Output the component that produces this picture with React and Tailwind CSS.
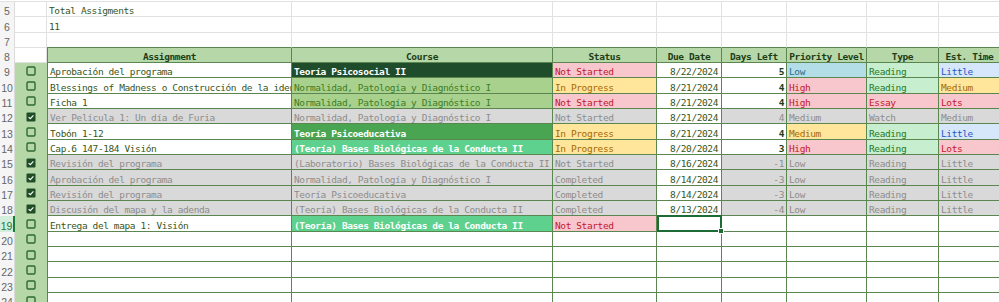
import React from 'react';

const rows = [
  { n: 9, done: false, a: 'Aprobación del programa', c: 'Teoría Psicosocial II', ck: 'dark', s: 'ns', d: '8/22/2024', left: '5', p: 'low', t: 'reading', e: 'little' },
  { n: 10, done: false, a: 'Blessings of Madness o Construcción de la identidad', c: 'Normalidad, Patología y Diagnóstico I', ck: 'olive', s: 'ip', d: '8/21/2024', left: '4', p: 'high', t: 'reading', e: 'medium' },
  { n: 11, done: false, a: 'Ficha 1', c: 'Normalidad, Patología y Diagnóstico I', ck: 'olive', s: 'ns', d: '8/21/2024', left: '4', p: 'high', t: 'essay', e: 'lots' },
  { n: 12, done: true, a: 'Ver Película 1: Un día de Furia', c: 'Normalidad, Patología y Diagnóstico I', s: 'ns', d: '8/21/2024', left: '4', p: 'medium', t: 'watch', e: 'medium' },
  { n: 13, done: false, a: 'Tobón 1-12', c: 'Teoría Psicoeducativa', ck: 'mid', s: 'ip', d: '8/21/2024', left: '4', p: 'medium', t: 'reading', e: 'little' },
  { n: 14, done: false, a: 'Cap.6 147-184 Visión', c: '(Teoría) Bases Biológicas de la Conducta II', ck: 'mint', s: 'ip', d: '8/20/2024', left: '3', p: 'high', t: 'reading', e: 'lots' },
  { n: 15, done: true, a: 'Revisión del programa', c: '(Laboratorio) Bases Biológicas de la Conducta II', s: 'ns', d: '8/16/2024', left: '-1', p: 'low', t: 'reading', e: 'little' },
  { n: 16, done: true, a: 'Aprobación del programa', c: 'Normalidad, Patología y Diagnóstico I', s: 'done', d: '8/14/2024', left: '-3', p: 'low', t: 'reading', e: 'little' },
  { n: 17, done: true, a: 'Revisión del programa', c: 'Teoría Psicoeducativa', s: 'done', d: '8/14/2024', left: '-3', p: 'low', t: 'reading', e: 'little' },
  { n: 18, done: true, a: 'Discusión del mapa y la adenda', c: '(Teoría) Bases Biológicas de la Conducta II', s: 'done', d: '8/13/2024', left: '-4', p: 'low', t: 'reading', e: 'little' },
  { n: 19, done: false, a: 'Entrega del mapa 1: Visión', c: '(Teoría) Bases Biológicas de la Conducta II', ck: 'mint', s: 'ns', selected: true },
  { n: 20 }, { n: 21 }, { n: 22 }, { n: 23 }, { n: 24 },
];

const GRAY = 'bg-[#d9d9d9] text-[#8d8d8d]';
const PINK = 'bg-[#f8c7cd] text-[#c3172c]';
const YELLOW = 'bg-[#ffe69a] text-[#a86800]';

const courseStyle = {
  dark: 'bg-[#1f4d2b] text-white font-bold',
  olive: 'bg-[#a9d18e] text-[#3b7d25]',
  mid: 'bg-[#4aa552] text-white font-bold',
  mint: 'bg-[#5ed18e] text-white font-bold',
};
const statusStyle = { ns: PINK, ip: YELLOW, done: GRAY };
const statusText = { ns: 'Not Started', ip: 'In Progress', done: 'Completed' };
const prioStyle = { low: 'bg-[#b3dde7] text-[#2d6e8c]', high: PINK, medium: YELLOW };
const prioText = { low: 'Low', high: 'High', medium: 'Medium' };
const typeStyle = { reading: 'bg-[#c7efcf] text-[#1f7a2a]', essay: PINK, watch: GRAY };
const typeText = { reading: 'Reading', essay: 'Essay', watch: 'Watch' };
const estStyle = { little: 'bg-[#d7e7fb] text-[#2858c0]', medium: YELLOW, lots: PINK };
const estText = { little: 'Little', medium: 'Medium', lots: 'Lots' };

function Box({ on }) {
  if (on) {
    return (
      <svg width="10" height="10" viewBox="0 0 10 10">
        <rect x="0.5" y="0.5" width="9" height="9" rx="1" fill="#1f4d26" />
        <path d="M2.6 5.1 L4.3 6.7 L7.4 3.3" stroke="#fff" strokeWidth="1.1" fill="none" />
      </svg>
    );
  }
  return (
    <svg width="10" height="10" viewBox="0 0 10 10">
      <rect x="1" y="1" width="8" height="8" rx="1.2" fill="none" stroke="#2e6a32" strokeWidth="1.4" />
    </svg>
  );
}

function RowHead({ n, selected }) {
  return (
    <div
      className={`w-[15px] shrink-0 flex items-end justify-center leading-[11px] text-[10.5px] tracking-normal font-['Liberation_Sans',sans-serif] ${
        selected
          ? 'bg-[#d3eedb] text-[#1c7a3c] border-r-2 border-[#1c7a3c]'
          : 'bg-[#f5f5f5] text-[#666] border-r border-[#dcdcdc]'
      }`}
    >
      {n}
    </div>
  );
}

// table cell inside the green bordered area
function Cell({ w, cls = '', right, children, first }) {
  return (
    <div
      className={`${w} shrink-0 h-full flex items-end overflow-hidden whitespace-nowrap px-[2px] leading-[11px] border-r border-b border-[#5b8650] ${
        first ? 'border-l' : ''
      } ${right ? 'justify-end' : ''} ${cls}`}
    >
      {children}
    </div>
  );
}

function TopRow({ n, b, last }) {
  const line = last ? 'border-b-[#5b8650]' : 'border-b-[#e1e1e1]';
  return (
    <div className="flex h-[15.33px]">
      <RowHead n={n} />
      <div className="w-[32px] shrink-0 border-r border-b border-[#e1e1e1]" />
      <div className={`w-[245px] shrink-0 flex items-end px-[2px] leading-[11px] text-[#375623] border-r border-b border-[#e1e1e1] ${line}`}>{b}</div>
      <div className={`w-[261px] shrink-0 border-r border-b border-[#e1e1e1] ${line}`} />
      <div className={`w-[104px] shrink-0 border-r border-b border-[#e1e1e1] ${line}`} />
      <div className={`w-[65px] shrink-0 border-r border-b border-[#e1e1e1] ${line}`} />
      <div className={`w-[65px] shrink-0 border-r border-b border-[#e1e1e1] ${line}`} />
      <div className={`w-[80px] shrink-0 border-r border-b border-[#e1e1e1] ${line}`} />
      <div className={`w-[72px] shrink-0 border-r border-b border-[#e1e1e1] ${line}`} />
      <div className={`w-[62px] shrink-0 border-r border-b border-[#e1e1e1] ${line}`} />
    </div>
  );
}

export default function App() {
  const head = ['Assignment', 'Course', 'Status', 'Due Date', 'Days Left', 'Priority Level', 'Type', 'Est. Time'];
  const widths = ['w-[245px]', 'w-[261px]', 'w-[104px]', 'w-[65px]', 'w-[65px]', 'w-[80px]', 'w-[72px]', 'w-[62px]'];

  return (
    <div className="w-[999px] h-[302px] overflow-hidden bg-white font-['DejaVu_Sans_Mono',monospace] text-[9.5px] tracking-[-0.4px]">
      <div className="h-[2px] bg-white border-b border-[#e1e1e1]" />
      <TopRow n={5} b="Total Assigments" />
      <TopRow n={6} b="11" />
      <TopRow n={7} b="" last />

      {/* header row */}
      <div className="flex h-[15px]">
        <RowHead n={8} />
        <div className="w-[32px] shrink-0 border-r border-b border-[#e1e1e1]" />
        {head.map((h, i) => (
          <div
            key={h}
            className={`${widths[i]} shrink-0 flex items-end justify-center leading-[11px] whitespace-nowrap overflow-hidden bg-[#b6d7a8] text-[#1d3d17] font-bold border-r border-b border-[#5b8650] ${
              i === 0 ? 'border-l' : ''
            }`}
          >
            {h}
          </div>
        ))}
      </div>

      {rows.map((r) => {
        const empty = !r.a;
        const g = r.done;
        return (
          <div key={r.n} className="flex h-[15.33px]">
            <RowHead n={r.n} selected={r.selected} />
            <div className="w-[32px] shrink-0 bg-[#b6d7a8] flex items-center justify-center">
              <Box on={r.done} />
            </div>
            <Cell w="w-[245px]" first cls={g ? GRAY : 'bg-white text-[#375623]'}>
              {r.a}
            </Cell>
            <Cell w="w-[261px]" cls={empty ? '' : g ? GRAY : courseStyle[r.ck]}>
              {r.c}
            </Cell>
            <Cell w="w-[104px]" cls={empty ? '' : statusStyle[g ? 'done' : r.s]}>
              {r.s ? statusText[r.s] : ''}
            </Cell>
            {r.selected ? (
              <div className="w-[65px] shrink-0 relative border-2 border-[#1e6b35] -mt-[1px] h-[16.33px]">
                <div className="absolute -right-[4px] -bottom-[4px] w-[6px] h-[6px] bg-[#1e6b35] border border-white" />
              </div>
            ) : (
              <Cell w="w-[65px]" right cls="text-[#375623] pr-[3px]">
                {r.d}
              </Cell>
            )}
            <Cell w="w-[65px]" right cls={empty || r.selected ? '' : g ? GRAY : 'text-[#1e3b17] font-bold'}>
              {r.left}
            </Cell>
            <Cell w="w-[80px]" cls={r.p ? (g ? GRAY : prioStyle[r.p]) : ''}>
              {r.p ? prioText[r.p] : ''}
            </Cell>
            <Cell w="w-[72px]" cls={r.t ? (g ? GRAY : typeStyle[r.t]) : ''}>
              {r.t ? typeText[r.t] : ''}
            </Cell>
            <Cell w="w-[62px]" cls={r.e ? (g ? GRAY : estStyle[r.e]) : ''}>
              {r.e ? estText[r.e] : ''}
            </Cell>
          </div>
        );
      })}
    </div>
  );
}
